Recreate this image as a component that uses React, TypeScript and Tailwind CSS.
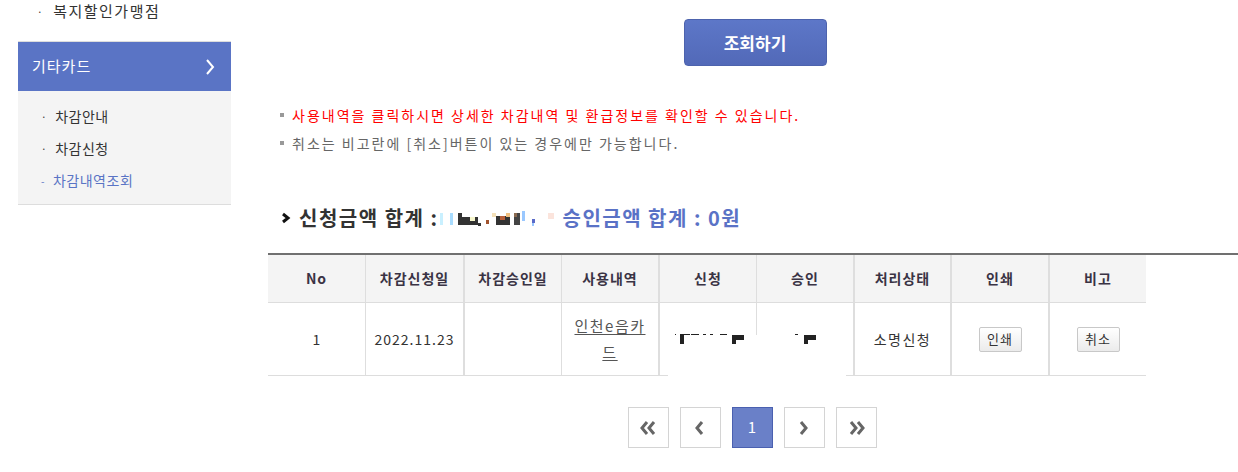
import React from 'react';

const FONT = "font-['Noto_Sans_CJK_KR','Noto_Sans',sans-serif]";

function Chevron({ dir, double }: { dir: 'l' | 'r'; double?: boolean }) {
  const one = dir === 'l' ? 'M9 3 L4 9 L9 15' : 'M4 3 L9 9 L4 15';
  const two = dir === 'l' ? 'M16 3 L11 9 L16 15' : 'M11 3 L16 9 L11 15';
  return (
    <svg width={double ? 21 : 14} height="18" viewBox={double ? '0 0 21 18' : '0 0 14 18'} fill="none">
      <path d={double && dir === 'r' ? 'M5 3 L10 9 L5 15' : one} stroke="#666" strokeWidth="3" />
      {double && <path d={dir === 'r' ? 'M12 3 L17 9 L12 15' : two} stroke="#666" strokeWidth="3" />}
    </svg>
  );
}

const cols = ['No', '차감신청일', '차감승인일', '사용내역', '신청', '승인', '처리상태', '인쇄', '비고'];
// column left borders, some render as 2px in the reference
const borders = ['', 'border-l', 'border-l-2', 'border-l', 'border-l-2', 'border-l', 'border-l-2', 'border-l-2', 'border-l-2'];

export default function App() {
  return (
    <div className={`flex w-[1238px] h-[472px] bg-white overflow-hidden ${FONT}`}>
      {/* Sidebar */}
      <aside className="ml-[18px] w-[213px] shrink-0">
        <div className="h-[41px] flex items-center pl-[19px] text-[15px] text-[#333] tracking-[1.5px] -mt-[9px] mb-[9px]">
          <span className="text-[10px] mr-[9px]">·</span>복지할인가맹점
        </div>
        <div className="border-t border-[#ddd] bg-[#5a74c5] h-[50px] flex items-center justify-between pl-[14px] pr-[16px] text-white text-[15px] tracking-[1px]">
          <span>기타카드</span>
          <svg width="10" height="18" viewBox="0 0 10 18" fill="none">
            <path d="M2 2 L8 9 L2 16" stroke="#fff" strokeWidth="2" />
          </svg>
        </div>
        <ul className="bg-[#f4f4f4] border-b border-[#ddd] pt-[9px] pb-[8px] text-[14px] tracking-[0.5px]">
          <li className="h-[32px] flex items-center pl-[23px] text-[#333]">
            <span className="text-[10px] mr-[8px]">·</span>차감안내
          </li>
          <li className="h-[32px] flex items-center pl-[23px] text-[#333]">
            <span className="text-[10px] mr-[8px]">·</span>차감신청
          </li>
          <li className="h-[32px] flex items-center pl-[23px] text-[#5a74c5]">
            <span className="text-[10px] mr-[8px]">-</span>차감내역조회
          </li>
        </ul>
      </aside>

      {/* Main */}
      <main className="ml-[37px] flex-1 flex flex-col">
        <div className="flex justify-center mt-[19px] pl-[4px]">
          <button className="w-[143px] h-[47px] rounded-[4px] bg-gradient-to-b from-[#5d77c8] to-[#5269b8] border border-[#4d63ad] text-white font-bold text-[17px]">
            조회하기
          </button>
        </div>

        <div className="mt-[35px] pl-[12px] text-[14px] tracking-[2px]">
          <p className="h-[28px] flex items-center text-[#ff0000]">
            <span className="w-[4px] h-[4px] bg-[#999] mr-[8px] shrink-0" />
            사용내역을 클릭하시면 상세한 차감내역 및 환급정보를 확인할 수 있습니다.
          </p>
          <p className="h-[28px] flex items-center text-[#666]">
            <span className="w-[4px] h-[4px] bg-[#999] mr-[8px] shrink-0" />
            취소는 비고란에 [취소]버튼이 있는 경우에만 가능합니다.
          </p>
        </div>

        <h2 className="mt-[47px] h-[28px] pl-[13px] flex items-center text-[20px] font-bold text-[#333] tracking-[1.5px]">
          <svg width="10" height="12" viewBox="0 0 10 12" className="mr-[8px]">
            <path d="M2 2 L7 6 L2 10" stroke="#111" strokeWidth="3" fill="none" />
          </svg>
          <span>신청금액 합계 :</span>
          <svg width="120" height="18" viewBox="0 0 120 18" className="ml-[2px] mr-[2px]">
            <rect x="0" y="4" width="3" height="12" fill="#c9f0ff" />
            <rect x="10" y="4" width="3" height="12" fill="#a8dcff" />
            <rect x="18" y="4" width="4" height="12" fill="#333" />
            <rect x="22" y="8" width="16" height="8" fill="#333" />
            <rect x="30" y="8" width="5" height="4" fill="#f6f6cc" />
            <rect x="38" y="14" width="3" height="3" fill="#333" />
            <rect x="46" y="11" width="3" height="4" fill="#a0522d" />
            <rect x="52" y="4" width="4" height="4" fill="#f4e0b8" />
            <rect x="56" y="7" width="14" height="9" fill="#333" />
            <rect x="60" y="7" width="5" height="4" fill="#b8603a" />
            <rect x="66" y="4" width="4" height="4" fill="#f0c080" />
            <rect x="74" y="4" width="6" height="12" fill="#444" />
            <rect x="74" y="4" width="3" height="4" fill="#8a6a50" />
            <rect x="82" y="2" width="3" height="10" fill="#9ac8ff" />
            <rect x="92" y="10" width="3" height="4" fill="#5a6ac8" />
            <rect x="92" y="14" width="2" height="3" fill="#9ac8ff" />
            <rect x="108" y="4" width="6" height="6" fill="#fbe4dc" />
          </svg>
          <span className="text-[#5a72c6]">승인금액 합계 : 0원</span>
        </h2>

        {/* Table */}
        <div className="mt-[21px] border-t-2 border-[#707070] relative">
          <div className="w-[878px]">
            <div className="grid grid-cols-[97px_98px_98px_97px_98px_97px_97px_98px_98px] bg-[#f4f4f4] h-[48px] border-b border-[#ddd]">
              {cols.map((c, i) => (
                <div key={c} className={`${borders[i]} border-[#dedede] flex items-center justify-center text-[14px] font-bold text-[#3a3344] tracking-[1px]`}>
                  {c}
                </div>
              ))}
            </div>
            <div className="grid grid-cols-[97px_98px_98px_97px_98px_97px_97px_98px_98px] h-[73px] border-b border-[#ddd] text-[14px] text-[#333]">
              <div className="flex items-center justify-center">1</div>
              <div className="border-l border-[#dedede] flex items-center justify-center tracking-[1px]">2022.11.23</div>
              <div className="border-l-2 border-[#dedede]" />
              <div className="border-l border-[#dedede] flex items-center justify-center px-[6px]">
                <a className="text-center text-[15px] leading-[26px] text-[#555] underline underline-offset-2 tracking-[1.5px]">인천e음카드</a>
              </div>
              <div className="border-l-2 border-[#dedede]" />
              <div className="border-l border-[#dedede]" />
              <div className="border-l-2 border-[#dedede] flex items-center justify-center tracking-[1.5px]">소명신청</div>
              <div className="border-l-2 border-[#dedede] flex items-center justify-center">
                <button className="w-[43px] h-[25px] border border-[#c8c8c8] rounded-[2px] bg-gradient-to-b from-white to-[#ebebeb] text-[13px] text-[#333] tracking-[1px]">인쇄</button>
              </div>
              <div className="border-l-2 border-[#dedede] flex items-center justify-center">
                <button className="w-[43px] h-[25px] border border-[#c8c8c8] rounded-[2px] bg-gradient-to-b from-white to-[#ebebeb] text-[13px] text-[#333] tracking-[1px]">취소</button>
              </div>
            </div>
          </div>
          {/* redacted amounts */}
          <svg className="absolute left-[400px] top-[78px]" width="180" height="56" viewBox="0 0 180 56">
            <rect x="0" y="2" width="178" height="54" fill="#fff" />
            <rect x="7" y="1" width="1" height="1" fill="#222" />
            <rect x="12" y="1" width="4" height="10" fill="#222" />
            <rect x="16" y="1" width="6" height="1" fill="#222" />
            <rect x="23" y="1" width="8" height="1" fill="#222" />
            <rect x="35" y="1" width="3" height="1" fill="#222" />
            <rect x="42" y="1" width="3" height="1" fill="#222" />
            <rect x="52" y="1" width="7" height="1" fill="#222" />
            <rect x="64" y="2" width="12" height="5" fill="#222" />
            <rect x="64" y="2" width="4" height="9" fill="#222" />
            <rect x="127" y="1" width="3" height="1" fill="#222" />
            <rect x="136" y="2" width="12" height="5" fill="#222" />
            <rect x="136" y="2" width="4" height="9" fill="#222" />
          </svg>
        </div>

        {/* Pagination */}
        <div className="mt-[31px] flex justify-center gap-[11px] pr-[2px]">
          <div className="w-[41px] h-[41px] border border-[#d4d4d4] flex items-center justify-center">
            <Chevron dir="l" double />
          </div>
          <div className="w-[41px] h-[41px] border border-[#d4d4d4] flex items-center justify-center">
            <Chevron dir="l" />
          </div>
          <div className="w-[41px] h-[41px] border border-[#4a60b0] bg-[#6a80c8] flex items-center justify-center text-white text-[15px]">
            1
          </div>
          <div className="w-[41px] h-[41px] border border-[#d4d4d4] flex items-center justify-center">
            <Chevron dir="r" />
          </div>
          <div className="w-[41px] h-[41px] border border-[#d4d4d4] flex items-center justify-center">
            <Chevron dir="r" double />
          </div>
        </div>
      </main>
    </div>
  );
}
